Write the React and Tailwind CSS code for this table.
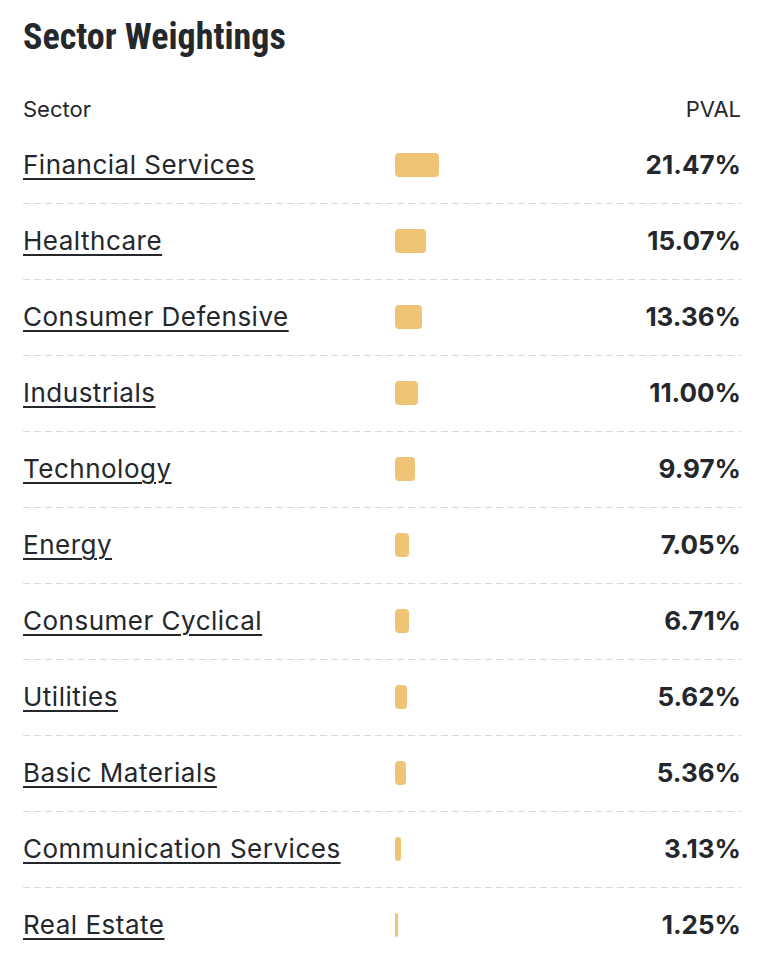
import React from 'react';

const sectors = [
  { name: 'Financial Services', value: 21.47 },
  { name: 'Healthcare', value: 15.07 },
  { name: 'Consumer Defensive', value: 13.36 },
  { name: 'Industrials', value: 11.0 },
  { name: 'Technology', value: 9.97 },
  { name: 'Energy', value: 7.05 },
  { name: 'Consumer Cyclical', value: 6.71 },
  { name: 'Utilities', value: 5.62 },
  { name: 'Basic Materials', value: 5.36 },
  { name: 'Communication Services', value: 3.13 },
  { name: 'Real Estate', value: 1.25 },
];

export default function App() {
  return (
    <div className="bg-white min-h-[978px] px-[23px] pt-[17px] text-[#24272c] font-['Inter',sans-serif]">
      <h2 className="text-[36px] leading-[40px] font-bold [font-stretch:condensed] font-['Roboto',sans-serif]">
        Sector Weightings
      </h2>

      <div className="w-[718px] mt-[34px]">
        {/* Header */}
        <div className="flex items-center justify-between h-[37px] text-[22px] leading-[37px]">
          <span>Sector</span>
          <span>PVAL</span>
        </div>

        {sectors.map((s, i) => (
          <div key={s.name}>
            <div className="flex items-center h-[75px] pb-[2px]">
              <a
                href="#"
                className="w-[372px] text-[26px] tracking-[0.5px] underline decoration-2 underline-offset-[4px]"
              >
                {s.name}
              </a>
              <div className="flex-1">
                <div
                  className="h-[24px] rounded-[4px] bg-[#f0c477]"
                  style={{ width: `${Math.max(s.value * 2.05, 2.5)}px` }}
                />
              </div>
              <span className="text-[26px] font-bold">{s.value.toFixed(2)}%</span>
            </div>
            {i < sectors.length - 1 && (
              <div className="h-px bg-[repeating-linear-gradient(to_right,#d9d9df_0_7px,transparent_7px_11px)]" />
            )}
          </div>
        ))}
      </div>
    </div>
  );
}
